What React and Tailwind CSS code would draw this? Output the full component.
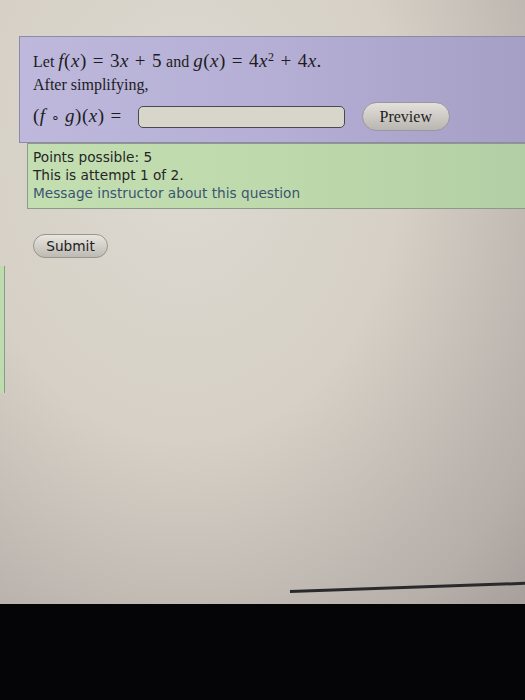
import React from 'react';

const serif = { fontFamily: '"Liberation Serif", "Times New Roman", serif' };
const sans = { fontFamily: '"DejaVu Sans", Verdana, sans-serif' };

// math segment, rendered a bit larger than the prose like MathJax does
function M({ children }) {
  return <span className="text-[19px] tracking-[0.5px]">{children}</span>;
}

function V({ children }) {
  return <span className="italic">{children}</span>;
}

function Op({ children, w = 'mx-[6px]' }) {
  return <span className={w}>{children}</span>;
}

export default function App() {
  return (
    <div className="h-[700px] w-[525px] overflow-hidden flex flex-col bg-[#050507]">
      <div className="h-[604px] relative bg-[radial-gradient(ellipse_at_35%_25%,#dddad1_0%,#d6d0c6_45%,#b6afaa_85%,#a69f9b_100%)]">
        <div className="pt-[36px] pl-[19px]">
          {/* question box */}
          <div
            className="h-[107px] border border-r-0 border-[#8e89a6] bg-gradient-to-r from-[#bdb8dc] via-[#b5afd5] to-[#a69fc5] pl-[13px] pt-[12px] text-[16px] text-[#1c1c22]"
            style={serif}
          >
            <div className="leading-[23px] whitespace-nowrap">
              Let{' '}
              <M>
                <V>f</V>(<V>x</V>)<Op>=</Op>3<V>x</V>
                <Op>+</Op>5
              </M>{' '}
              and{' '}
              <M>
                <V>g</V>(<V>x</V>)<Op>=</Op>4<V>x</V>
                <sup className="text-[12px]">2</sup>
                <Op>+</Op>4<V>x</V>.
              </M>
            </div>
            <div className="leading-[23px]">After simplifying,</div>
            <div className="flex items-center mt-[6px]">
              <M>
                (<V>f</V>
                <span className="mx-[5px] text-[14px]">∘</span>
                <V>g</V>)(<V>x</V>)
                <Op>=</Op>
              </M>
              <div className="ml-[10px] w-[207px] h-[22px] rounded-[5px] border border-[#4a4850] bg-[#d8d5cb]" />
              <button
                className="ml-[17px] w-[88px] h-[29px] rounded-full border border-[#9a96a2] bg-gradient-to-b from-[#e4e1dc] to-[#b9b5b1] text-[16px] text-[#1d1d1d]"
                style={serif}
              >
                Preview
              </button>
            </div>
          </div>

          {/* info box */}
          <div
            className="ml-[8px] h-[66px] border border-r-0 border-[#8d9a88] bg-gradient-to-r from-[#c3dfb2] via-[#bedaac] to-[#b2cea4] pl-[5px] pt-[4px] text-[13.7px] leading-[18px] text-[#262626]"
            style={sans}
          >
            <div>Points possible: 5</div>
            <div>This is attempt 1 of 2.</div>
            <div className="text-[#3b5570]">Message instructor about this question</div>
          </div>

          <button
            className="mt-[25px] ml-[14px] w-[75px] h-[24px] rounded-full border border-[#98958f] bg-gradient-to-b from-[#e9e6e0] to-[#bdb9b3] text-[13.7px] text-[#222]"
            style={sans}
          >
            Submit
          </button>
        </div>

        {/* sliver of another window at the left edge */}
        <div className="mt-[8px] w-[5px] h-[127px] bg-[#bfdcae] border-r border-[#8d9a88]" />

        {/* frame edge line */}
        <div className="mt-[197px] ml-[290px] w-[240px] h-[3px] bg-[#2a2a2c] -rotate-2 origin-left" />
      </div>
    </div>
  );
}
